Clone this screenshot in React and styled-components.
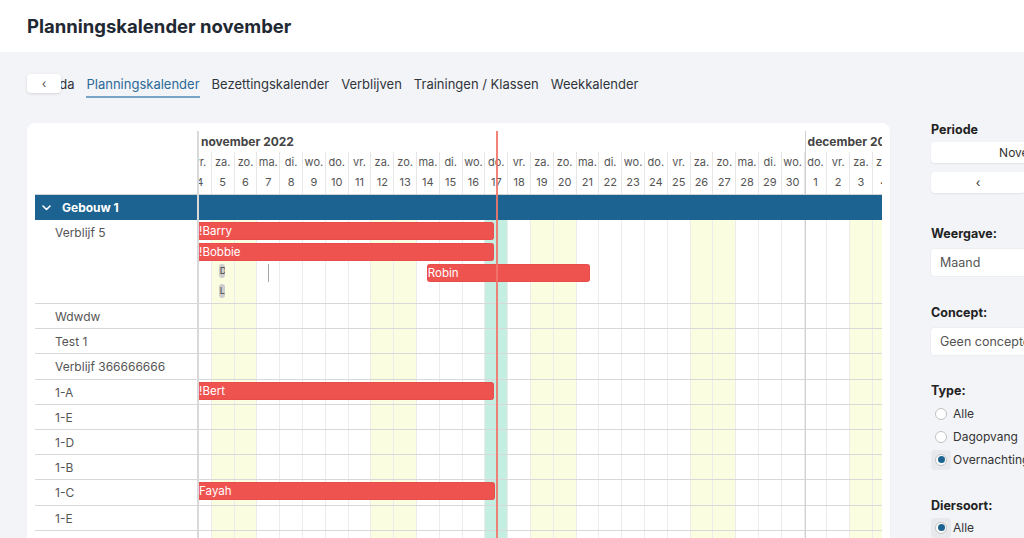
import React from 'react';
import styled, { createGlobalStyle } from 'styled-components';

const COL = 22.8;
const ROW = 25.2;
const LANE = 21;
const DAY_NAMES = ['zo.', 'ma.', 'di.', 'wo.', 'do.', 'vr.', 'za.'];

const days = Array.from({ length: 31 }, (_, i) => {
  const d = new Date(2022, 10, 4 + i);
  const wd = d.getDay();
  return {
    key: i,
    date: d.getDate(),
    name: DAY_NAMES[wd],
    weekend: wd === 0 || wd === 6,
    today: d.getMonth() === 10 && d.getDate() === 17,
    monthStart: d.getDate() === 1,
  };
});

const rows = [
  {
    label: 'Verblijf 5',
    lanes: [
      [{ type: 'bar', text: '!Barry', from: 0.4, to: 13.37, clipped: true }],
      [{ type: 'bar', text: '!Bobbie', from: 0.4, to: 13.37, clipped: true }],
      [
        { type: 'pill', text: 'Dex', at: 1.3 },
        { type: 'tick', at: 3.45 },
        { type: 'bar', text: 'Robin', from: 10.43, to: 17.58 },
      ],
      [{ type: 'pill', text: 'Luna', at: 1.3 }],
    ],
  },
  { label: 'Wdwdw' },
  { label: 'Test 1' },
  { label: 'Verblijf 366666666' },
  { label: '1-A', lanes: [[{ type: 'bar', text: '!Bert', from: 0.4, to: 13.37, clipped: true }]] },
  { label: '1-E' },
  { label: '1-D' },
  { label: '1-B' },
  { label: '1-C', lanes: [[{ type: 'bar', text: 'Fayah', from: 0.4, to: 13.42, clipped: true }]] },
  { label: '1-E' },
  { label: '1-F' },
  { label: '2-A' },
];

const GlobalStyle = createGlobalStyle`
  html, body {
    margin: 0;
    overflow: hidden;
    background: #f3f4f8;
  }
  body {
    font-family: Inter, "Noto Sans", sans-serif;
    color: #2a2f35;
  }
  * { box-sizing: border-box; }
`;

const TopBar = styled.header`
  height: 52px;
  background: #fff;
  display: flex;
  align-items: center;
  padding-left: 27px;
`;

const Title = styled.h1`
  margin: 0;
  font-size: 18.5px;
  font-weight: 700;
  color: #1f2933;
`;

const Content = styled.div`
  display: flex;
  align-items: flex-start;
  gap: 41px;
  padding: 22px 0 0 27px;
`;

const Main = styled.main`
  width: 863px;
  flex-shrink: 0;
`;

const TabBar = styled.nav`
  position: relative;
  display: flex;
  gap: 12px;
  height: 24px;
`;

const Tab = styled.span`
  font-size: 13px;
  line-height: 16px;
  padding: 2px 0 2px;
  white-space: nowrap;
  color: ${(p) => (p.$active ? '#2b6a98' : '#30353b')};
  border-bottom: 2px solid ${(p) => (p.$active ? '#78a4c7' : 'transparent')};
`;

const ScrollButton = styled.button`
  position: absolute;
  left: 0;
  top: 0;
  width: 34px;
  height: 19px;
  border: none;
  border-radius: 4px;
  background: #fff;
  box-shadow: 0 1px 3px rgba(0, 0, 0, 0.12);
  font-family: inherit;
  font-size: 12px;
  color: #555;
  padding: 0;
`;

const Card = styled.section`
  margin-top: 25px;
  background: #fff;
  border-radius: 8px;
  padding: 8px 8px 0 8px;
  box-shadow: 0 1px 2px rgba(0, 0, 0, 0.04);
`;

const Board = styled.div`
  display: flex;
`;

const LeftCol = styled.div`
  width: 164px;
  flex-shrink: 0;
  border-right: 2px solid #d9d9d9;
`;

const HeaderSpacer = styled.div`
  height: 63px;
`;

const GroupLabel = styled.div`
  height: 26px;
  border-top: 1px solid #cfd3d6;
  background: #1d6391;
  color: #fff;
  font-weight: 700;
  font-size: 12px;
  display: flex;
  align-items: center;
  gap: 11px;
  padding-left: 7px;
`;

const RowLabel = styled.div`
  height: ${(p) => p.$h}px;
  border-bottom: 1px solid #d8d8d8;
  font-size: 12px;
  line-height: 15px;
  color: #555;
  padding: 5px 0 0 20px;
  white-space: nowrap;
`;

const Viewport = styled.div`
  flex: 1;
  overflow: hidden;
`;

const Track = styled.div`
  position: relative;
  margin-left: -10px;
  width: ${31 * COL}px;
`;

const MonthRow = styled.div`
  display: flex;
  height: 21px;
`;

const MonthCell = styled.div`
  flex: 0 0 ${(p) => p.$cols * COL}px;
  padding-left: ${(p) => p.$pad}px;
  font-size: 12px;
  font-weight: 700;
  line-height: 21px;
  color: #444;
  white-space: nowrap;
  box-shadow: ${(p) => (p.$divider ? 'inset 1px 0 0 #d0d0d0' : 'none')};
`;

const DayHeaderRow = styled.div`
  display: flex;
  height: 42px;
`;

const DayHead = styled.div`
  flex: 0 0 ${COL}px;
  display: flex;
  flex-direction: column;
  align-items: center;
  font-size: 11px;
  line-height: 20px;
  color: #555;
  border-right: 1px solid #e6e6e6;
  box-shadow: ${(p) => (p.$monthStart ? 'inset 1px 0 0 #d0d0d0' : 'none')};
`;

const GroupBand = styled.div`
  height: 26px;
  border-top: 1px solid #cfd3d6;
  background: #1d6391;
`;

const TimeRow = styled.div`
  position: relative;
  height: ${(p) => p.$h}px;
  border-bottom: 1px solid #d8d8d8;
  display: flex;
`;

const Cell = styled.div`
  flex: 0 0 ${COL}px;
  height: 100%;
  border-right: 1px solid #ececec;
  background: ${(p) => (p.$today ? '#c4eee2' : p.$weekend ? '#fbfde0' : '#fff')};
  box-shadow: ${(p) => (p.$monthStart ? 'inset 1px 0 0 #d0d0d0' : 'none')};
`;

const Lanes = styled.div`
  position: absolute;
  inset: 0;
  display: flex;
  flex-direction: column;
`;

const Lane = styled.div`
  position: relative;
  height: ${LANE}px;
`;

const Bar = styled.div`
  position: absolute;
  top: 2px;
  height: 18px;
  background: #ef5350;
  border-radius: ${(p) => (p.$clipped ? '0 3px 3px 0' : '3px')};
  box-shadow: inset 0 0 0 1px rgba(190, 40, 40, 0.12);
  color: #fff;
  font-size: 11.5px;
  line-height: 18px;
  padding-left: 1px;
  white-space: nowrap;
  overflow: hidden;
`;

const Pill = styled.div`
  position: absolute;
  top: 2px;
  width: 6px;
  height: 14px;
  border-radius: 3px;
  background: #cdcdcd;
  color: #444;
  font-size: 9px;
  line-height: 14px;
  overflow: hidden;
  padding-left: 1px;
`;

const Tick = styled.div`
  position: absolute;
  top: 2px;
  width: 1px;
  height: 18px;
  background: #a5a5a5;
`;

const NowLine = styled.div`
  position: absolute;
  top: 0;
  bottom: 0;
  left: ${13.5 * COL - 1}px;
  width: 2px;
  background: rgba(241, 118, 106, 0.9);
  z-index: 3;
`;

const Sidebar = styled.aside`
  width: 228px;
  flex-shrink: 0;
  margin-top: 48px;
`;

const FieldLabel = styled.div`
  margin-top: ${(p) => p.$mt || 0}px;
  font-size: 12.5px;
  font-weight: 700;
  line-height: 15px;
  color: #222;
`;

const PlainButton = styled.button`
  display: block;
  width: ${(p) => p.$w || '100%'};
  height: 21px;
  border: none;
  border-radius: 4px;
  background: #fff;
  box-shadow: 0 1px 2px rgba(0, 0, 0, 0.07);
  font-family: inherit;
  font-size: 12px;
  color: #333;
  padding: 0;
  white-space: nowrap;
`;

const ButtonRow = styled.div`
  display: flex;
  gap: 6px;
  margin-top: 9px;
`;

const PeriodButton = styled(PlainButton)`
  margin-top: 5px;
`;

const SelectBox = styled.div`
  margin-top: 8px;
  height: 27px;
  border-radius: 4px;
  background: #fff;
  box-shadow: 0 0 0 1px #eceef2;
  font-size: 12.5px;
  line-height: 27px;
  color: #555;
  padding-left: 9px;
  white-space: nowrap;
`;

const RadioList = styled.div`
  margin-top: ${(p) => p.$mt}px;
`;

const RadioRow = styled.label`
  display: flex;
  align-items: center;
  height: 23px;
  gap: 2px;
  font-size: 12px;
  color: #333;
  white-space: nowrap;
`;

const RadioHalo = styled.span`
  width: 20px;
  height: 20px;
  border-radius: 4px;
  background: ${(p) => (p.$checked ? '#e8e9ec' : 'transparent')};
  display: flex;
  align-items: center;
  justify-content: center;
`;

const RadioCircle = styled.span`
  width: 12px;
  height: 12px;
  border-radius: 50%;
  border: 1px solid #c2c2c2;
  background: #fff;
  display: flex;
  align-items: center;
  justify-content: center;

  &::after {
    content: '';
    width: 7px;
    height: 7px;
    border-radius: 50%;
    background: ${(p) => (p.$checked ? '#1d6391' : 'transparent')};
  }
`;

function Radio({ label, checked }) {
  return (
    <RadioRow>
      <RadioHalo $checked={checked}>
        <RadioCircle $checked={checked} />
      </RadioHalo>
      {label}
    </RadioRow>
  );
}

function Chevron() {
  return (
    <svg width="9" height="6" viewBox="0 0 9 6" fill="none">
      <path d="M1 1l3.5 3.5L8 1" stroke="#fff" strokeWidth="1.6" strokeLinecap="round" strokeLinejoin="round" />
    </svg>
  );
}

function TimelineItem({ item }) {
  if (item.type === 'bar') {
    return (
      <Bar
        $clipped={item.clipped}
        style={{ left: item.from * COL, width: (item.to - item.from) * COL }}
      >
        {item.text}
      </Bar>
    );
  }
  if (item.type === 'pill') {
    return <Pill style={{ left: item.at * COL }}>{item.text}</Pill>;
  }
  return <Tick style={{ left: item.at * COL }} />;
}

function rowHeight(row) {
  return row.lanes && row.lanes.length > 1 ? row.lanes.length * LANE : ROW;
}

export default function App() {
  return (
    <>
      <GlobalStyle />
      <TopBar>
        <Title>Planningskalender november</Title>
      </TopBar>
      <Content>
        <Main>
          <TabBar>
            <Tab>Agenda</Tab>
            <Tab $active>Planningskalender</Tab>
            <Tab>Bezettingskalender</Tab>
            <Tab>Verblijven</Tab>
            <Tab>Trainingen / Klassen</Tab>
            <Tab>Weekkalender</Tab>
            <ScrollButton>‹</ScrollButton>
          </TabBar>

          <Card>
            <Board>
              <LeftCol>
                <HeaderSpacer />
                <GroupLabel>
                  <Chevron />
                  Gebouw 1
                </GroupLabel>
                {rows.map((row, i) => (
                  <RowLabel key={i} $h={rowHeight(row)}>
                    {row.label}
                  </RowLabel>
                ))}
              </LeftCol>

              <Viewport>
                <Track>
                  <MonthRow>
                    <MonthCell $cols={27} $pad={12}>november 2022</MonthCell>
                    <MonthCell $cols={4} $pad={3} $divider>december 2022</MonthCell>
                  </MonthRow>
                  <DayHeaderRow>
                    {days.map((d) => (
                      <DayHead key={d.key} $monthStart={d.monthStart}>
                        <span>{d.name}</span>
                        <span>{d.date}</span>
                      </DayHead>
                    ))}
                  </DayHeaderRow>
                  <GroupBand />
                  {rows.map((row, i) => (
                    <TimeRow key={i} $h={rowHeight(row)}>
                      {days.map((d) => (
                        <Cell
                          key={d.key}
                          $weekend={d.weekend}
                          $today={d.today}
                          $monthStart={d.monthStart}
                        />
                      ))}
                      {row.lanes && (
                        <Lanes>
                          {row.lanes.map((lane, j) => (
                            <Lane key={j}>
                              {lane.map((item, k) => (
                                <TimelineItem key={k} item={item} />
                              ))}
                            </Lane>
                          ))}
                        </Lanes>
                      )}
                    </TimeRow>
                  ))}
                  <NowLine />
                </Track>
              </Viewport>
            </Board>
          </Card>
        </Main>

        <Sidebar>
          <FieldLabel>Periode</FieldLabel>
          <PeriodButton>November 2022</PeriodButton>
          <ButtonRow>
            <PlainButton $w="94px">‹</PlainButton>
            <PlainButton $w="94px">Vandaag</PlainButton>
          </ButtonRow>

          <FieldLabel $mt={33}>Weergave:</FieldLabel>
          <SelectBox>Maand</SelectBox>

          <FieldLabel $mt={29}>Concept:</FieldLabel>
          <SelectBox>Geen concepten</SelectBox>

          <FieldLabel $mt={28}>Type:</FieldLabel>
          <RadioList $mt={4}>
            <Radio label="Alle" />
            <Radio label="Dagopvang" />
            <Radio label="Overnachting" checked />
          </RadioList>

          <FieldLabel $mt={27}>Diersoort:</FieldLabel>
          <RadioList $mt={3}>
            <Radio label="Alle" checked />
            <Radio label="Hond" />
          </RadioList>
        </Sidebar>
      </Content>
    </>
  );
}
